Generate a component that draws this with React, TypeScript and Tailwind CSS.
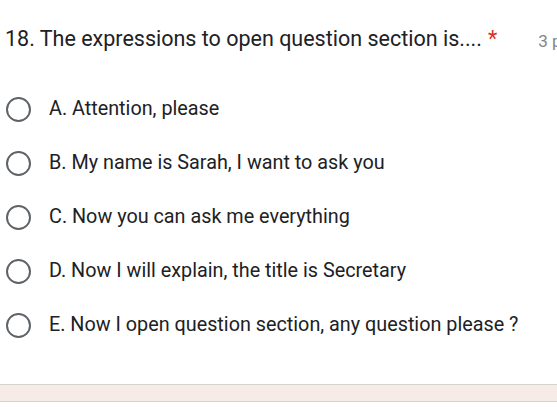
const options = [
  'A. Attention, please',
  'B. My name is Sarah, I want to ask you',
  'C. Now you can ask me everything',
  'D. Now I will explain, the title is Secretary',
  'E. Now I open question section, any question please ?',
]

export default function App() {
  return (
    <div className="w-[557px] h-[410px] overflow-hidden bg-white text-[#202124] font-['Roboto',sans-serif]">
      <div className="flex items-start h-[58px] pt-[24px] pl-[5px] whitespace-nowrap">
        <span className="text-[21.5px] leading-[30px]">18. The expressions to open question section is....</span>
        <span className="text-[21.5px] leading-[30px] text-[#d93025] ml-[6px]">*</span>
        <span className="ml-[41px] mt-[5px] text-[17px] leading-[24px] text-[#80868b] whitespace-nowrap">3 points</span>
      </div>
      <div className="flex flex-col pt-[24px]">
        {options.map(opt => (
          <div key={opt} className="flex items-center h-[54px] pl-[6px] gap-[18px]">
            <div className="w-[25px] h-[25px] rounded-full border-2 border-[#5f6368] shrink-0" />
            <span className="text-[19.8px] leading-[26px] whitespace-nowrap">{opt}</span>
          </div>
        ))}
      </div>
      <div className="mt-[32px] h-[18px] border-y border-[#d6d2d0] bg-[#f6ebe6]" />
    </div>
  )
}
